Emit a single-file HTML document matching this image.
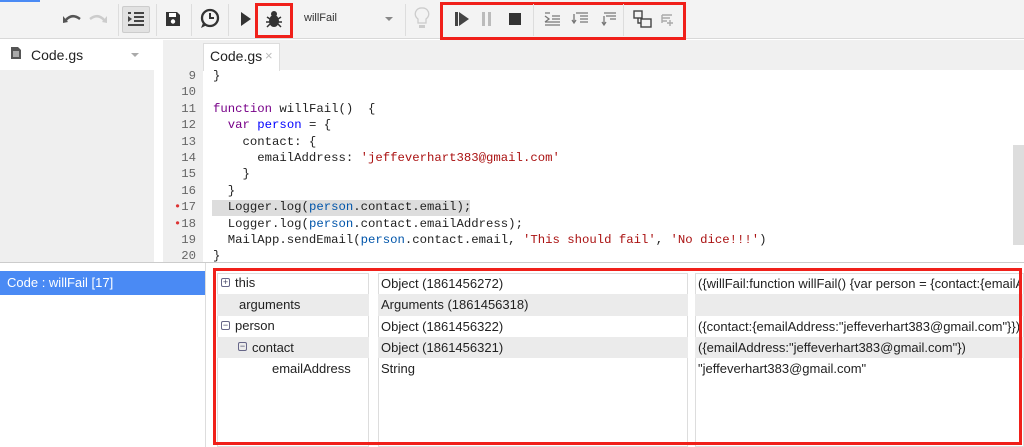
<!DOCTYPE html>
<html><head><meta charset="utf-8"><style>
*{margin:0;padding:0;box-sizing:border-box}
body{width:1024px;height:447px;overflow:hidden;background:#fff;font-family:"Liberation Sans",Arial,sans-serif;position:relative}
.a{position:absolute}
.code{font-family:"Liberation Mono",monospace;font-size:12.3px;color:#222;white-space:pre;line-height:16.4px}
.ln{font-family:"Liberation Mono",monospace;font-size:12.3px;color:#666;line-height:16.4px;text-align:right;width:33px;white-space:pre}
.kw{color:#708}.vr{color:#05a}.st{color:#a11}.df{color:#00f}
.sep{position:absolute;top:4px;width:1px;height:32px;background:#ddd}
.red{position:absolute;border:3px solid #f0201a}
.t{font-size:13px;color:#222;position:absolute;white-space:nowrap}
</style></head><body>
<!-- toolbar -->
<div class="a" style="left:0;top:0;width:1024px;height:39px;background:#f3f3f3;border-bottom:1px solid #d8d8d8"></div>
<div class="a" style="left:0;top:0;width:40px;height:2px;background:#4a8af4"></div>
<svg class="a" style="left:60px;top:9px" width="50" height="20"><path d="M6 11 Q12 4 20 10" stroke="#555" stroke-width="2.5" fill="none"/><path d="M3 7 L8 13 L3 14Z" fill="#555"/><path d="M44 11 Q38 4 30 10" stroke="#ccc" stroke-width="2.5" fill="none"/><path d="M47 7 L42 13 L47 14Z" fill="#ccc"/></svg>
<div class="sep" style="left:118px"></div>
<div class="a" style="left:122px;top:6px;width:28px;height:27px;background:#e2e2e2;border:1px solid #ccc;border-radius:2px"></div>
<svg class="a" style="left:128px;top:11px" width="16" height="16"><rect x="0" y="1" width="3" height="2" fill="#444"/><rect x="6" y="1" width="10" height="2" fill="#444"/><rect x="6" y="5" width="10" height="2" fill="#444"/><rect x="6" y="9" width="10" height="2" fill="#444"/><rect x="0" y="13" width="16" height="2" fill="#444"/><path d="M0 5 L4 8 L0 11Z" fill="#444"/></svg>
<div class="sep" style="left:156px"></div>
<svg class="a" style="left:165px;top:11px" width="16" height="16"><path d="M1 1 H12 L15 4 V15 H1Z" fill="#333"/><rect x="4" y="2" width="7" height="4" fill="#fff"/><circle cx="8" cy="10.5" r="2.2" fill="#fff"/></svg>
<div class="sep" style="left:191px"></div>
<svg class="a" style="left:199px;top:8px" width="22" height="22"><circle cx="11" cy="10" r="8" stroke="#333" stroke-width="2.3" fill="none"/><path d="M11 5 V10 H15" stroke="#333" stroke-width="2" fill="none"/><path d="M4 15 L2 20 L8 17" fill="#333"/></svg>
<div class="sep" style="left:228px"></div>
<svg class="a" style="left:241px;top:12px" width="10" height="14"><path d="M0 0 L10 7 L0 14Z" fill="#333"/></svg>
<svg class="a" style="left:264px;top:10px" width="20" height="18"><ellipse cx="10" cy="11" rx="5" ry="6" fill="#333"/><circle cx="10" cy="4" r="3" fill="#333"/><path d="M3 7 L6 9 M2 12 H6 M3 17 L6 14 M17 7 L14 9 M18 12 H14 M17 17 L14 14" stroke="#333" stroke-width="1.5"/></svg>
<div class="red" style="left:255px;top:3px;width:38px;height:35px"></div>
<div class="t" style="left:304px;top:12px;font-size:11px;color:#333">willFail</div>
<svg class="a" style="left:385px;top:17px" width="8" height="5"><path d="M0 0 H8 L4 4Z" fill="#888"/></svg>
<div class="sep" style="left:405px"></div>
<svg class="a" style="left:414px;top:7px" width="16" height="24"><path d="M8 1 A6 6 0 0 1 12 12 V16 H4 V12 A6 6 0 0 1 8 1Z" stroke="#ccc" stroke-width="1.3" fill="none"/><rect x="5" y="18" width="6" height="3" fill="#ccc"/></svg>
<div class="red" style="left:440px;top:2px;width:246px;height:38px"></div>
<svg class="a" style="left:455px;top:12px" width="14" height="14"><rect x="0" y="0" width="3" height="14" fill="#444"/><path d="M4 0 L14 7 L4 14Z" fill="#444"/></svg>
<svg class="a" style="left:482px;top:12px" width="10" height="14"><rect x="0" y="0" width="3" height="14" fill="#bbb"/><rect x="6" y="0" width="3" height="14" fill="#bbb"/></svg>
<div class="a" style="left:509px;top:13px;width:12px;height:12px;background:#333"></div>
<div class="sep" style="left:533px"></div>
<svg class="a" style="left:544px;top:11px" width="90" height="18" stroke="#777" stroke-width="1.3" fill="none"><path d="M1 2H6M8 5H16M8 8H16M1 11H16M1 14H16M1 5 L5 8 L1 11"/><path d="M32 2H44M36 5H44M36 8H44M36 11H44M30 3V12M28 9 L30 12 L32 9"/><path d="M60 2H72M62 5H72M66 8H72M60 5V14M58 11 L60 14 L62 11"/></svg>
<div class="sep" style="left:623px"></div>
<svg class="a" style="left:633px;top:10px" width="48" height="20" stroke="#444" stroke-width="1.4" fill="none"><rect x="1" y="1" width="8" height="7"/><rect x="8" y="9" width="10" height="8"/><path d="M5 8V13H8"/><path d="M29 5H39M29 8H37M29 11H34M29 5V13M37 10V16M34 13H40" stroke="#aaa"/></svg>
<!-- left file panel -->
<div class="a" style="left:0;top:40px;width:154px;height:223px;background:#efefef"></div>
<div class="a" style="left:0;top:40px;width:154px;height:30px;background:#fff"></div>
<svg class="a" style="left:11px;top:47px" width="10" height="12"><path d="M0 0H7L10 3V12H0Z" fill="#555"/><path d="M2 5H8M2 7H8M2 9H8" stroke="#fff"/></svg>
<div class="t" style="left:31px;top:47px;font-size:14px">Code.gs</div>
<svg class="a" style="left:131px;top:53px" width="8" height="5"><path d="M0 0H8L4 4Z" fill="#aaa"/></svg>
<!-- editor -->
<div class="a" style="left:163px;top:40px;width:861px;height:30px;background:#f0f0f0"></div>
<div class="a" style="left:203px;top:43px;width:77px;height:28px;background:#fff;border:1px solid #ddd;border-bottom:none"></div>
<div class="t" style="left:210px;top:48px;font-size:14px">Code.gs</div>
<div class="t" style="left:265px;top:48px;font-size:13px;color:#bbb">×</div>
<div class="a" style="left:163px;top:70px;width:40px;height:193px;background:#efefef"></div>
<div class="a ln" style="left:163px;top:68px">  9
 10
 11
 12
 13
 14
 15
 16
<span style="color:#d33">•</span>17
<span style="color:#d33">•</span>18
 19
 20</div>
<div class="a" style="left:212px;top:200px;width:258px;height:16px;background:#ddd"></div>
<div class="a code" style="left:213px;top:68px">}

<span class="kw">function</span> willFail()  {
  <span class="kw">var</span> <span class="df">person</span> = {
    contact: {
      emailAddress: <span class="st">'jeffeverhart383@gmail.com'</span>
    }
  }
  Logger.log(<span class="vr">person</span>.contact.email);
  Logger.log(<span class="vr">person</span>.contact.emailAddress);
  MailApp.sendEmail(<span class="vr">person</span>.contact.email, <span class="st">'This should fail'</span>, <span class="st">'No dice!!!'</span>)
}</div>
<div class="a" style="left:1013px;top:145px;width:11px;height:100px;background:#ddd"></div>
<!-- bottom -->
<div class="a" style="left:0;top:262px;width:1024px;height:1px;background:#ccc"></div>
<div class="a" style="left:0;top:271px;width:205px;height:24px;background:#4a8af4"></div>
<div class="a" style="left:205px;top:263px;width:1px;height:184px;background:#ddd"></div>
<div class="t" style="left:7px;top:275px;font-size:13px;color:#fff">Code : willFail [17]</div>
<div class="a" style="left:217px;top:273px;width:152px;height:174px;border:1px solid #ddd"></div>
<div class="a" style="left:378px;top:273px;width:310px;height:174px;border:1px solid #ddd"></div>
<div class="a" style="left:695px;top:273px;width:329px;height:174px;border:1px solid #ddd"></div>
<div class="a" style="left:217px;top:294px;width:807px;height:22px;background:#ebebeb"></div>
<div class="a" style="left:217px;top:337px;width:807px;height:21px;background:#ebebeb"></div>
<div class="a" style="left:369px;top:273px;width:9px;height:174px;background:#fff"></div>
<div class="a" style="left:688px;top:273px;width:7px;height:174px;background:#fff"></div>
<div class="a" style="left:221px;top:278px;width:9px;height:9px;border:1px solid #668;border-radius:2px;font-size:9px;line-height:7px;text-align:center;color:#446">+</div>
<div class="a" style="left:221px;top:321px;width:9px;height:9px;border:1px solid #668;border-radius:2px;font-size:9px;line-height:6px;text-align:center;color:#446">−</div>
<div class="a" style="left:238px;top:342px;width:9px;height:9px;border:1px solid #668;border-radius:2px;font-size:9px;line-height:6px;text-align:center;color:#446">−</div>
<div class="t" style="left:235px;top:275px">this</div>
<div class="t" style="left:239px;top:297px">arguments</div>
<div class="t" style="left:235px;top:318px">person</div>
<div class="t" style="left:252px;top:340px">contact</div>
<div class="t" style="left:272px;top:361px">emailAddress</div>
<div class="t" style="left:381px;top:276px">Object (1861456272)</div>
<div class="t" style="left:381px;top:297px">Arguments (1861456318)</div>
<div class="t" style="left:381px;top:319px">Object (1861456322)</div>
<div class="t" style="left:381px;top:340px">Object (1861456321)</div>
<div class="t" style="left:381px;top:361px">String</div>
<div class="a" style="left:696px;top:268px;width:325px;height:174px;overflow:hidden">
<div class="t" style="left:2px;top:8px">({willFail:function willFail() {var person = {contact:{emailAddress:</div>
<div class="t" style="left:2px;top:51px">({contact:{emailAddress:"jeffeverhart383@gmail.com"}})</div>
<div class="t" style="left:2px;top:72px">({emailAddress:"jeffeverhart383@gmail.com"})</div>
<div class="t" style="left:2px;top:93px">"jeffeverhart383@gmail.com"</div>
</div>
<div class="red" style="left:213px;top:268px;width:809px;height:177px"></div>
</body></html>
